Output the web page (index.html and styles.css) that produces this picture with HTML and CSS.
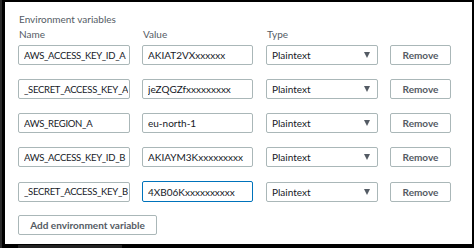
FILE: index.html
```html
<!DOCTYPE html>
<html lang="en">
<head>
    <meta charset="UTF-8">
    <title>Environment variables</title>
    <link rel="stylesheet" href="styles.css">
</head>
<body>
    <div class="frame">
        <div class="panel">
            <div class="heading">Environment variables</div>
            <div class="labels">
                <span class="col-name">Name</span>
                <span class="col-value">Value</span>
                <span class="col-type">Type</span>
            </div>

            <div class="env-list">
                <div class="env-row">
                    <input class="field col-name" value="AWS_ACCESS_KEY_ID_A">
                    <input class="field col-value" value="AKIAT2VXxxxxxx">
                    <div class="select col-type">Plaintext <span class="caret"></span></div>
                    <button class="btn remove">Remove</button>
                </div>
                <div class="env-row">
                    <input class="field col-name" value="_SECRET_ACCESS_KEY_A">
                    <input class="field col-value" value="jeZQGZfxxxxxxxxx">
                    <div class="select col-type">Plaintext <span class="caret"></span></div>
                    <button class="btn remove">Remove</button>
                </div>
                <div class="env-row">
                    <input class="field col-name" value="AWS_REGION_A">
                    <input class="field col-value" value="eu-north-1">
                    <div class="select col-type">Plaintext <span class="caret"></span></div>
                    <button class="btn remove">Remove</button>
                </div>
                <div class="env-row">
                    <input class="field col-name" value="AWS_ACCESS_KEY_ID_B">
                    <input class="field col-value" value="AKIAYM3Kxxxxxxxxx">
                    <div class="select col-type">Plaintext <span class="caret"></span></div>
                    <button class="btn remove">Remove</button>
                </div>
                <div class="env-row">
                    <input class="field col-name" value="_SECRET_ACCESS_KEY_B">
                    <input class="field col-value focused" value="4XB06Kxxxxxxxxxx">
                    <div class="select col-type">Plaintext <span class="caret"></span></div>
                    <button class="btn remove">Remove</button>
                </div>
            </div>

            <button class="btn add">Add environment variable</button>
        </div>
        <div class="below"></div>
    </div>
</body>
</html>
```

FILE: styles.css
```css
:root {
    --text: #16191f;
    --label: #545b64;
    --border: #aab7b8;
    --focus: #0073bb;
}

body {
    margin: 0;
    background: #000;
    font-family: Lato, 'Open Sans', sans-serif;
}

.frame {
    height: 248px;
    padding: 2px 2px 0 3px;
    box-sizing: border-box;
    border-left: 2px solid #2a2a2a;
    position: relative;
}

.panel {
    background: #fff;
    height: 242px;
    padding: 10px 0 0 13px;
    box-sizing: border-box;
}

.heading {
    font-size: 10px;
    line-height: 14px;
    color: var(--label);
    margin-left: 1px;
}

.labels {
    display: flex;
    gap: 12px;
    font-size: 10px;
    line-height: 14px;
    color: var(--label);
    margin: 1px 0 4px 1px;
}

.labels span {
    display: block;
}

.col-name { width: 112px; }
.col-value { width: 111px; }
.col-type { width: 112px; }

.labels .col-type { margin-left: 1px; }

.env-list {
    display: flex;
    flex-direction: column;
    gap: 14px;
}

.env-row {
    display: flex;
    align-items: center;
    gap: 12px;
}

.env-row .col-type { margin-left: 1px; }

.field,
.select {
    height: 20px;
    box-sizing: border-box;
    border: 1px solid var(--border);
    border-radius: 2px;
    font-family: inherit;
    font-size: 10px;
    color: var(--text);
    padding: 0 5px;
    background: #fff;
    outline: none;
}

.field.col-name {
    font-size: 9.5px;
    letter-spacing: -0.3px;
    padding: 0 1px 0 5px;
}

.field.focused {
    border-color: var(--focus);
    height: 21px;
}

.select {
    display: flex;
    align-items: center;
    justify-content: space-between;
    padding-right: 7px;
}

.caret {
    width: 0;
    height: 0;
    border-left: 3.5px solid transparent;
    border-right: 3.5px solid transparent;
    border-top: 6px solid #545b64;
}

.btn {
    height: 20px;
    box-sizing: border-box;
    border: 1px solid var(--border);
    border-radius: 2px;
    background: #fff;
    color: var(--label);
    font-family: inherit;
    font-size: 10px;
    font-weight: 700;
    padding: 0;
}

.remove {
    width: 61px;
}

.add {
    width: 139px;
    margin-top: 13px;
}

.below {
    position: absolute;
    left: 16px;
    bottom: 0;
    width: 104px;
    height: 3px;
    background: #222;
}
```
